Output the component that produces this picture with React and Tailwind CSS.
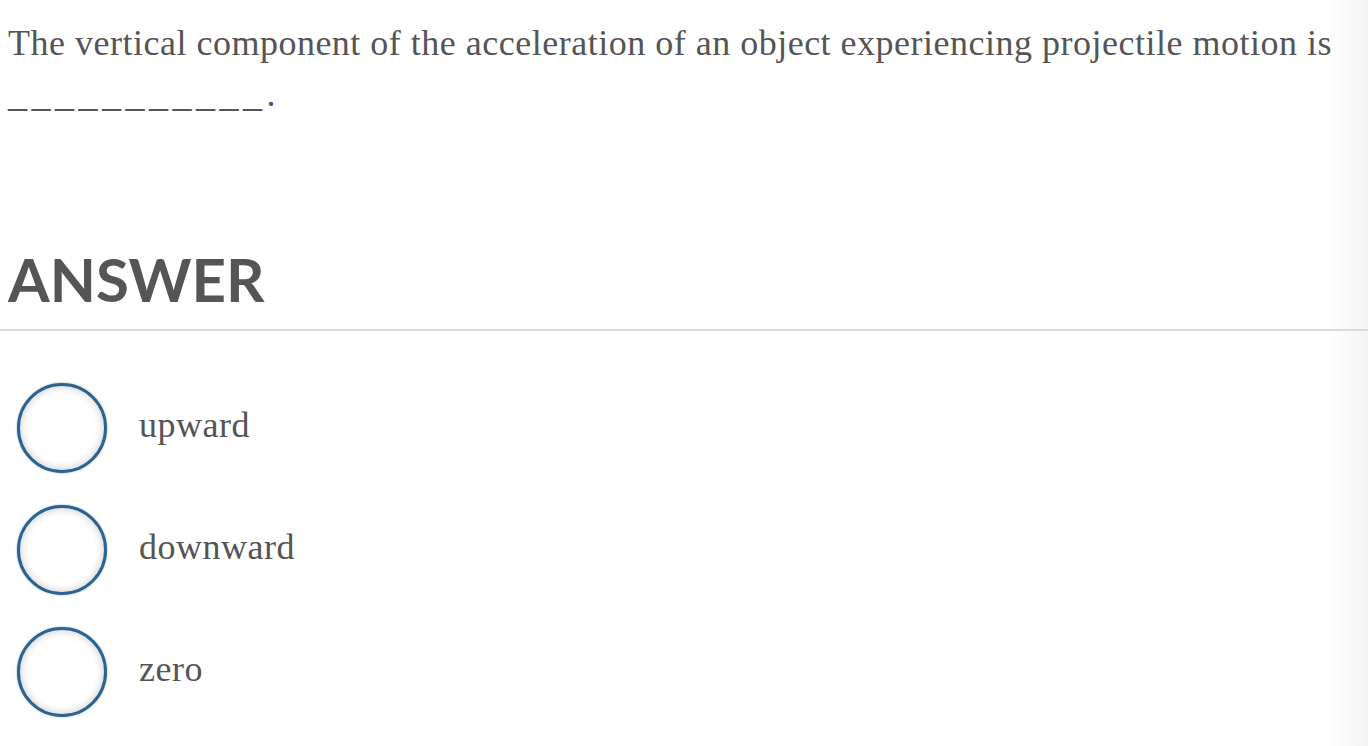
const serif = { fontFamily: '"Liberation Serif", "DejaVu Serif", serif' }

const OPTIONS = ['upward', 'downward', 'zero']

function Radio() {
    return (
        <span className="block w-[90px] h-[90px] shrink-0 rounded-full border-[3px] border-[#2c6391] bg-white shadow-[inset_0_0_8px_rgba(0,0,0,0.22),0_0_2px_rgba(44,99,145,0.6)]" />
    )
}

export default function App() {
    return (
        <div className="relative w-[1368px] h-[746px] overflow-hidden bg-white">
            {/* faint edge shade on the right */}
            <div className="absolute top-0 right-0 w-[40px] h-full bg-gradient-to-r from-white to-[#f4f4f4] pointer-events-none" />

            <div className="relative pl-[8px]">
                <p className="pt-[18px] text-[36px] leading-[50px] tracking-[0.5px] text-[#555555] font-normal" style={serif}>
                    The vertical component of the acceleration of an object experiencing projectile motion is
                    <br />
                    <span className="text-[38px] tracking-[4.5px]">___________</span>.
                </p>

                <h2 className="mt-[125px] text-[60px] leading-[70px] font-bold text-[#555555]" style={{ fontFamily: 'Lato, "Open Sans", sans-serif' }}>
                    ANSWER
                </h2>
            </div>

            <div className="relative mt-[15px] h-[2px] bg-[#dadada]" />

            <ul className="relative mt-[52px] pl-[17px] flex flex-col gap-[32px]">
                {OPTIONS.map(opt => (
                    <li key={opt} className="flex items-center gap-[32px]">
                        <Radio />
                        <span className="pb-[6px] text-[36px] tracking-[0.5px] text-[#555555]" style={serif}>{opt}</span>
                    </li>
                ))}
            </ul>
        </div>
    )
}
